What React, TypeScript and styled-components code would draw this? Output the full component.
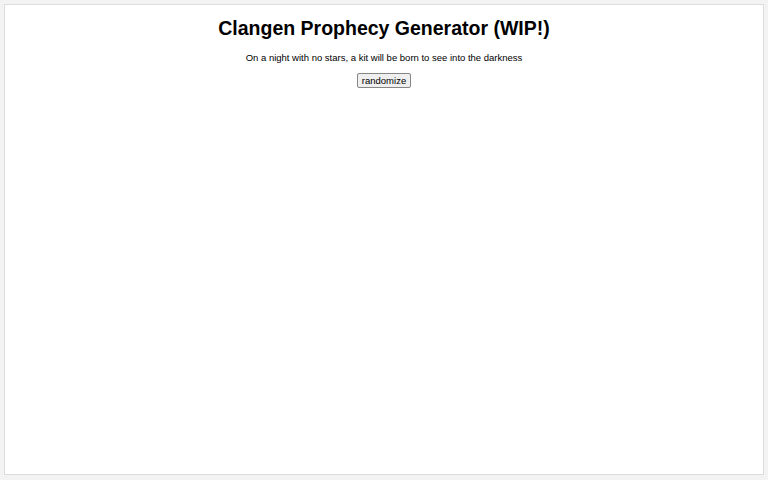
import React, { useState } from "react";
import styled, { createGlobalStyle } from "styled-components";

const GlobalStyle = createGlobalStyle`
  html, body {
    margin: 0;
    padding: 0;
    background-color: #f3f3f3;
    font-family: "Liberation Sans", Arial, sans-serif;
  }
`;

const Page = styled.div`
  height: 480px;
  padding: 4px 4px 5px 4px;
  box-sizing: border-box;
`;

const Card = styled.main`
  height: 100%;
  box-sizing: border-box;
  background-color: #ffffff;
  border: 1px solid #dcdcdc;
  display: flex;
  flex-direction: column;
  align-items: center;
  padding-top: 11px;
  color: #000;
`;

const Title = styled.h1`
  margin: 0;
  font-size: 19.5px;
  font-weight: bold;
  line-height: 24px;
`;

const Prophecy = styled.p`
  margin: 11px 0 0 0;
  font-size: 9.5px;
  line-height: 13px;
`;

const Button = styled.button`
  margin-top: 9px;
  font-family: "Liberation Sans", Arial, sans-serif;
  font-size: 9.5px;
  line-height: 11px;
  padding: 1px 4px;
  background-color: #efefef;
  border: 1px solid #858585;
  border-radius: 2px;
  color: #000;
`;

const lines = [
  "On a night with no stars, a kit will be born to see into the darkness",
  "When the river runs red, a leader will rise from the shadows",
  "Fire and ice will meet beneath the great oak",
];

export default function App() {
  const [index, setIndex] = useState(0);

  return (
    <>
      <GlobalStyle />
      <Page>
        <Card>
          <Title>Clangen Prophecy Generator (WIP!)</Title>
          <Prophecy>{lines[index]}</Prophecy>
          <Button onClick={() => setIndex((index + 1) % lines.length)}>
            randomize
          </Button>
        </Card>
      </Page>
    </>
  );
}
